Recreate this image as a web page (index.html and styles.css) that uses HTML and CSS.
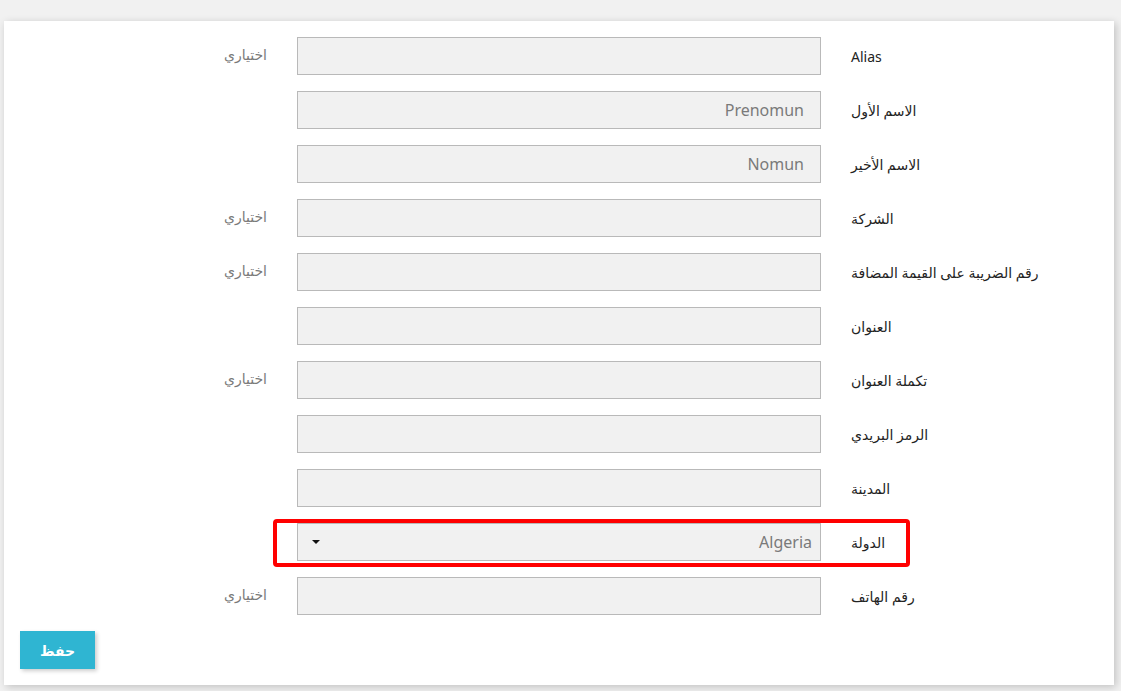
FILE: index.html
```html
<!DOCTYPE html>
<html lang="ar" dir="rtl">
<head>
<meta charset="utf-8">
<title>العنوان</title>
<link rel="stylesheet" href="styles.css">
</head>
<body>
<div class="page">
  <section class="card">
    <form class="form">
      <div class="row">
        <label class="label" dir="ltr">Alias</label>
        <div class="field"><input class="input" type="text"></div>
        <div class="comment">اختياري</div>
      </div>
      <div class="row">
        <label class="label">الاسم الأول</label>
        <div class="field"><input class="input" type="text" placeholder="Prenomun"></div>
        <div class="comment"></div>
      </div>
      <div class="row">
        <label class="label">الاسم الأخير</label>
        <div class="field"><input class="input" type="text" placeholder="Nomun"></div>
        <div class="comment"></div>
      </div>
      <div class="row">
        <label class="label">الشركة</label>
        <div class="field"><input class="input" type="text"></div>
        <div class="comment">اختياري</div>
      </div>
      <div class="row">
        <label class="label">رقم الضريبة على القيمة المضافة</label>
        <div class="field"><input class="input" type="text"></div>
        <div class="comment">اختياري</div>
      </div>
      <div class="row">
        <label class="label">العنوان</label>
        <div class="field"><input class="input" type="text"></div>
        <div class="comment"></div>
      </div>
      <div class="row">
        <label class="label">تكملة العنوان</label>
        <div class="field"><input class="input" type="text"></div>
        <div class="comment">اختياري</div>
      </div>
      <div class="row">
        <label class="label">الرمز البريدي</label>
        <div class="field"><input class="input" type="text"></div>
        <div class="comment"></div>
      </div>
      <div class="row">
        <label class="label">المدينة</label>
        <div class="field"><input class="input" type="text"></div>
        <div class="comment"></div>
      </div>
      <div class="row row-highlight">
        <span class="highlight"></span>
        <label class="label">الدولة</label>
        <div class="field">
          <div class="select">
            <span class="select-value">Algeria</span>
            <svg class="caret" width="8" height="4" viewBox="0 0 8 4"><path d="M0 0H8L4 4Z" fill="#111"/></svg>
          </div>
        </div>
        <div class="comment"></div>
      </div>
      <div class="row">
        <label class="label">رقم الهاتف</label>
        <div class="field"><input class="input" type="text"></div>
        <div class="comment">اختياري</div>
      </div>
      <footer class="footer">
        <button class="btn" type="button">حفظ</button>
      </footer>
    </form>
  </section>
</div>
</body>
</html>
```

FILE: styles.css
```css
* { box-sizing: border-box; }

html, body {
  margin: 0;
  padding: 0;
  background: #f1f1f1;
  font-family: "Noto Sans", "DejaVu Sans", sans-serif;
  color: #232323;
}

.page {
  padding: 21px 7px 6px 4px;
}

.card {
  width: 1110px;
  background: #fff;
  box-shadow: 2px 2px 8px 0 rgba(0, 0, 0, 0.2);
  padding: 16px 1px 16px 1px;
}

.form {
  display: flex;
  flex-direction: column;
  gap: 16px;
}

.row {
  position: relative;
  display: grid;
  grid-template-columns: 277px 554px 277px;
  align-items: center;
  height: 38px;
}

.label {
  padding: 0 15px;
  font-size: 14px;
  text-align: left;
  color: #232323;
  white-space: nowrap;
  line-height: 20px;
  padding-top: 2px;
}

.label[dir="ltr"] { text-align: left; }

.field {
  padding: 0 15px;
  height: 38px;
}

.input, .select {
  display: block;
  width: 100%;
  height: 38px;
  margin: 0;
  background: #f1f1f1;
  border: 1px solid #b9b9b9;
  border-radius: 0;
  font-family: inherit;
  font-size: 16px;
  color: #7a7a7a;
  padding: 0 16px;
  outline: none;
}

.input::placeholder { color: #7a7a7a; opacity: 1; }

.select {
  display: flex;
  align-items: center;
  justify-content: space-between;
  padding: 0 8px 0 14px;
}

.select-value {
  font-size: 16px;
  color: #7a7a7a;
  line-height: 20px;
}

.caret { display: block; }

.comment {
  padding: 0 15px;
  font-size: 14px;
  color: #7a7a7a;
  text-align: right;
  line-height: 20px;
  padding-bottom: 3px;
}

.highlight {
  position: absolute;
  top: -4px;
  bottom: -6px;
  right: 203px;
  left: 268px;
  border: 4px solid #ff0000;
  border-radius: 4px;
  pointer-events: none;
}

.footer {
  display: flex;
  justify-content: flex-end;
  padding-left: 15px;
}

.btn {
  width: 75px;
  height: 38px;
  border: 0;
  background: #2fb5d2;
  color: #fff;
  font-family: inherit;
  font-size: 14px;
  font-weight: 700;
  box-shadow: 2px 2px 4px 0 rgba(0, 0, 0, 0.2);
  cursor: pointer;
}
```
